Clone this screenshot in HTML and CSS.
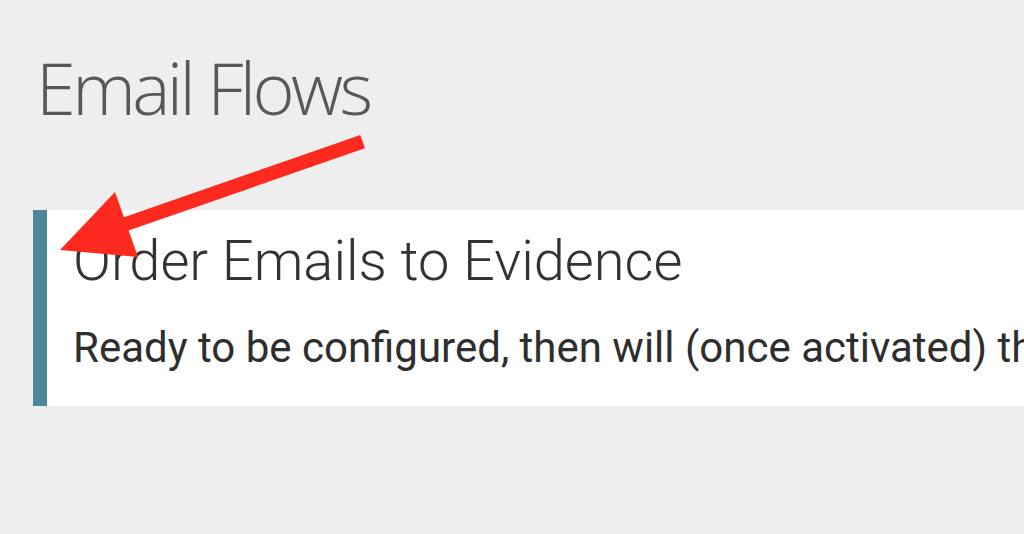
FILE: index.html
```html
<!DOCTYPE html>
<html>
<head>
<meta charset="utf-8">
<link rel="stylesheet" href="styles.css">
</head>
<body>
<main class="page">
  <h1 class="page-title">Email Flows</h1>
  <section class="flow-card">
    <h2 class="flow-name">Order Emails to Evidence</h2>
    <p class="flow-desc">Ready to be configured, then will (once activated) the emails will be sent to Evidence</p>
  </section>
</main>
<svg class="annotation" width="1024" height="534" viewBox="0 0 1024 534">
  <line x1="356" y1="144" x2="120" y2="226" stroke="#ff2a1f" stroke-width="14" stroke-linecap="square"/>
  <polygon points="60,250 115,192 138,257" fill="#ff2a1f"/>
</svg>
</body>
</html>
```
FILE: styles.css
```css
html, body {
  margin: 0;
  padding: 0;
}
body {
  background: #eeeeee;
  width: 1024px;
  height: 534px;
  overflow: hidden;
  position: relative;
}
.page {
  padding: 51px 0 0 33px;
}
.page-title {
  margin: 0 0 0 3px;
  font-family: "Open Sans", "Liberation Sans", sans-serif;
  font-weight: 300;
  font-size: 72px;
  line-height: 1;
  color: #58585c;
  letter-spacing: -3.6px;
}
.flow-card {
  margin-top: 87px;
  height: 196px;
  box-sizing: border-box;
  background: #ffffff;
  border-left: 14px solid #4e8799;
  padding: 23px 0 0 26px;
  white-space: nowrap;
  overflow: hidden;
}
.flow-name {
  margin: 0;
  font-family: Roboto, "Liberation Sans", sans-serif;
  font-weight: 300;
  font-size: 56px;
  line-height: 1;
  color: #333333;
}
.flow-desc {
  margin: 38px 0 0 0;
  font-family: Roboto, "Liberation Sans", sans-serif;
  font-weight: 400;
  font-size: 42px;
  line-height: 1;
  color: #2e2e2e;
}
.annotation {
  position: absolute;
  left: 0;
  top: 0;
  pointer-events: none;
}
```
